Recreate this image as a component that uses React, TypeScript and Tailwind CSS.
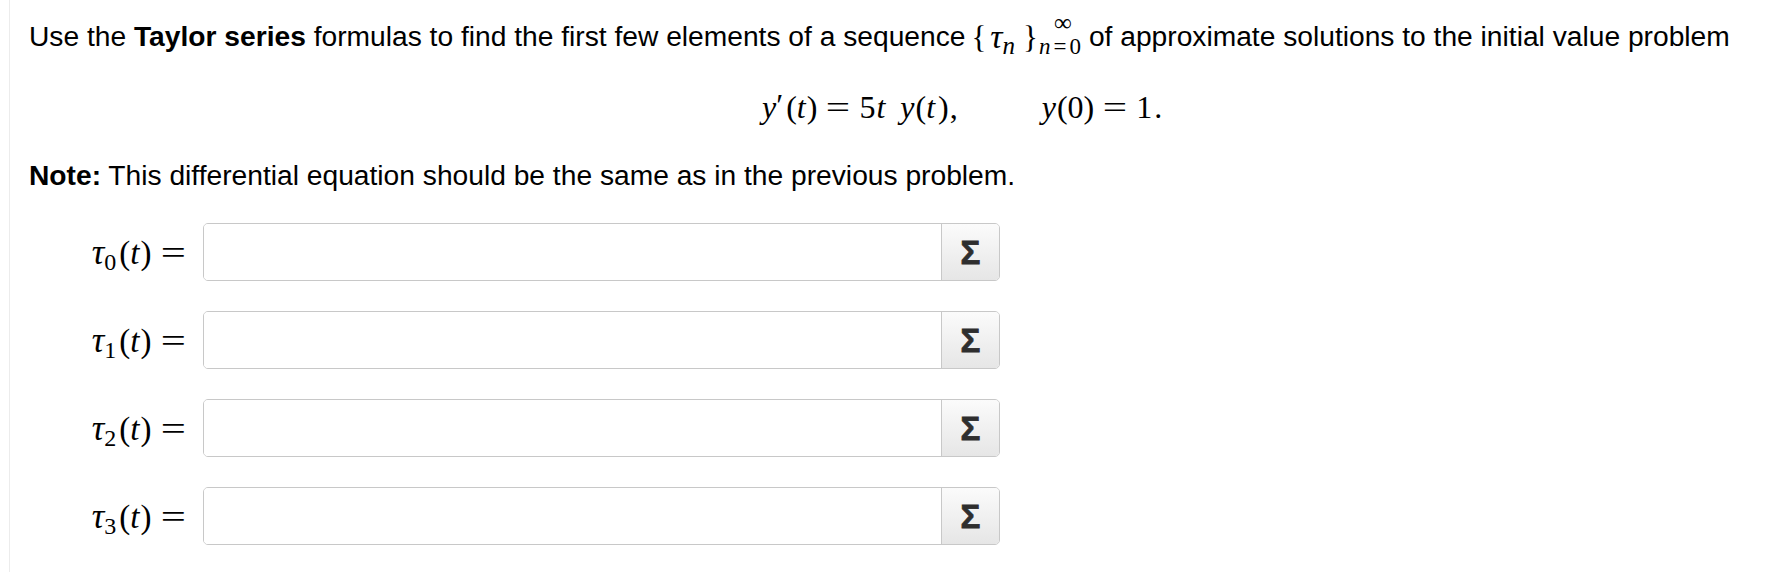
import React from "react";

const sans = "font-['Liberation_Sans','Helvetica','Arial',sans-serif]";
const serif = "font-['Liberation_Serif','Times_New_Roman',serif]";

// relation sign, drawn a little wider as the TeX font does
function Eq({ className = "mx-[12px]" }: { className?: string }) {
  return <span className={`inline-block scale-x-[1.35] ${className}`}>=</span>;
}

function Tau({ n }: { n: number }) {
  return (
    <span className={`${serif} text-[33px] leading-none text-black whitespace-nowrap flex items-baseline`}>
      <i className="text-[35px]">τ</i>
      <span className="relative top-[6px] text-[24px]">{n}</span>
      <span className="ml-[3px]">(</span>
      <i className="pr-[1px]">t</i>
      <span>)</span>
      <Eq className="ml-[13px] mr-[3px]" />
    </span>
  );
}

function AnswerRow({ n }: { n: number }) {
  return (
    <div className="flex items-center">
      <div className="w-[157px] flex justify-end">
        <Tau n={n} />
      </div>
      <div className="ml-[17px] w-[797px] h-[58px] flex rounded-[5px] border border-[#c8c8c8] shadow-[inset_0_1px_1px_rgba(0,0,0,0.08)] overflow-hidden">
        <input type="text" className="flex-1 min-w-0 bg-white outline-none px-2" />
        <button className="w-[58px] shrink-0 border-l border-[#c8c8c8] bg-gradient-to-b from-[#fbfbfb] to-[#e6e6e6] flex items-center justify-center">
          <span className={`${sans} text-[33px] font-bold text-[#2e2e2e] leading-none [-webkit-text-stroke:0.8px_#2e2e2e]`}>Σ</span>
        </button>
      </div>
    </div>
  );
}

export default function App() {
  return (
    <div className="min-h-[572px] w-[1768px] bg-white pl-[9px]">
      <div className={`min-h-[572px] border-l border-[#ececec] pl-[19px] ${sans} text-black`}>
        {/* Problem statement */}
        <div className="pt-[18px] h-[54px] flex items-center text-[28.2px] whitespace-nowrap">
          <span>
            Use the <b>Taylor series</b> formulas to find the first few elements of a sequence
          </span>
          <span className={`${serif} ml-[6px] text-[31px] flex items-baseline`}>
            <span>{"{"}</span>
            <i className="ml-[4px] text-[34px]">τ</i>
            <i className="relative top-[6px] text-[25px]">n</i>
            <span className="ml-[8px]">{"}"}</span>
          </span>
          <span className={`${serif} inline-flex flex-col items-center ml-[1px] relative -top-[1px]`}>
            <span className="text-[25px] leading-[24px] -mr-[6px]">∞</span>
            <span className="text-[23px] leading-[24px] flex">
              <i>n</i>
              <span className="mx-[3px]">=</span>0
            </span>
          </span>
          <span className="ml-[8px]">of approximate solutions to the initial value problem</span>
        </div>

        {/* Differential equation */}
        <div className={`mt-[35px] h-[36px] flex items-center ${serif} text-[32px] whitespace-nowrap pl-[733px]`}>
          <span className="flex items-baseline">
            <i>y</i>
            <span className="relative -top-[2px]">′</span>
            <span className="ml-[3px]">(</span>
            <i className="pr-[1px]">t</i>
            <span>)</span>
            <Eq />
            <span className="mr-[1px]">5</span>
            <i className="pr-[2px]">t</i>
            <i className="ml-[13px]">y</i>
            <span className="ml-[1px]">(</span>
            <i className="pr-[3px]">t</i>
            <span>)</span>
            <span className="ml-[1px]">,</span>
          </span>
          <span className="ml-[84px] flex items-baseline">
            <i>y</i>
            <span className="ml-[1px]">(0)</span>
            <Eq />
            <span>1</span>
            <span className="ml-[2px]">.</span>
          </span>
        </div>

        {/* Note */}
        <div className="mt-[32px] h-[36px] flex items-center text-[28.2px] whitespace-nowrap">
          <span>
            <b>Note:</b> This differential equation should be the same as in the previous problem.
          </span>
        </div>

        {/* Answers */}
        <div className="mt-[30px] flex flex-col gap-[30px]">
          {[0, 1, 2, 3].map((n) => (
            <AnswerRow key={n} n={n} />
          ))}
        </div>
      </div>
    </div>
  );
}
